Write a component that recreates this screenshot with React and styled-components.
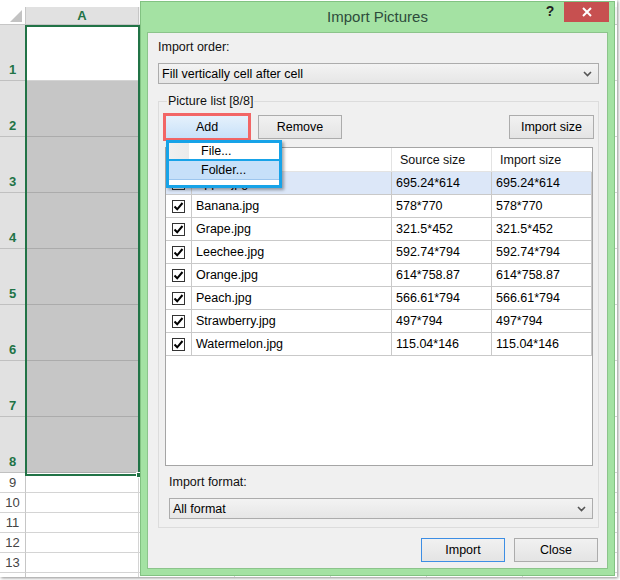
import React from "react";
import styled, { createGlobalStyle } from "styled-components";

const GlobalStyle = createGlobalStyle`
  html, body {
    margin: 0;
    padding: 0;
    background: #fff;
  }
  body {
    font-family: "Liberation Sans", Arial, sans-serif;
  }
  * {
    box-sizing: border-box;
  }
`;

const Page = styled.div`
  width: 620px;
  height: 580px;
  background: #fff;
`;

/* ---------- spreadsheet behind the dialog ---------- */

const Sheet = styled.div`
  position: relative;
  width: 617px;
  height: 577px;
  padding-top: 7px;
  background: #fff;
  box-shadow: 1px 1px 3px rgba(0, 0, 0, 0.45);
  overflow: hidden;
`;

const Grid = styled.div`
  display: grid;
  grid-template-columns: 26px 113px repeat(6, 96px);
  grid-template-rows: 18px repeat(8, 56px) repeat(6, 20px);
`;

const Corner = styled.div`
  display: flex;
  align-items: flex-end;
  justify-content: flex-end;
  padding: 0 3px 2px 0;
  background: #fff;
  border-right: 1px solid #c6c6c6;
  border-bottom: 1px solid #c6c6c6;
`;

const ColHead = styled.div`
  display: flex;
  align-items: center;
  justify-content: center;
  background: ${(p) => (p.$active ? "#e1e1e1" : "#f3f3f3")};
  color: ${(p) => (p.$active ? "#217346" : "#444")};
  border-right: 1px solid #c6c6c6;
  border-bottom: 1px solid #c6c6c6;
  font-size: 13px;
  font-weight: bold;
`;

const RowHead = styled.div`
  display: flex;
  justify-content: center;
  align-items: ${(p) => (p.$tall ? "flex-end" : "center")};
  padding-bottom: ${(p) => (p.$tall ? "3px" : "0")};
  background: ${(p) => (p.$active ? "#e1e1e1" : "#fff")};
  color: ${(p) => (p.$active ? "#217346" : "#444")};
  font-weight: ${(p) => (p.$active ? "bold" : "normal")};
  font-size: 13px;
  border-right: 1px solid #c6c6c6;
  border-bottom: 1px solid ${(p) => (p.$active ? "#c0c0c0" : "#d4d4d4")};
`;

const Cell = styled.div`
  background: ${(p) => (p.$fill ? "#c6c6c6" : "#fff")};
  border-right: 1px solid #d4d4d4;
  border-bottom: 1px solid ${(p) => (p.$fill ? "#ababab" : "#d4d4d4")};
`;

const Selection = styled.div`
  position: absolute;
  left: 25px;
  top: 25px;
  width: 115px;
  height: 451px;
  border: 2px solid #217346;
  pointer-events: none;
`;

const FillHandle = styled.div`
  position: absolute;
  right: -4px;
  bottom: -4px;
  width: 6px;
  height: 6px;
  background: #217346;
  border: 1px solid #fff;
`;

/* ---------- dialog ---------- */

const Dialog = styled.div`
  position: absolute;
  left: 140px;
  top: 1px;
  width: 475px;
  height: 575px;
  display: flex;
  flex-direction: column;
  background: #a4e2a3;
  border: 1px solid #82c282;
`;

const TitleBar = styled.div`
  height: 30px;
  display: grid;
  grid-template-columns: 1fr auto 1fr;
`;

const Title = styled.div`
  grid-column: 2;
  line-height: 30px;
  font-size: 15px;
  color: #2e4c3c;
`;

const Controls = styled.div`
  display: flex;
  justify-content: flex-end;
  align-items: flex-start;
  padding-right: 5px;
`;

const Help = styled.div`
  width: 14px;
  margin-right: 7px;
  line-height: 19px;
  text-align: center;
  font-size: 14px;
  font-weight: bold;
  color: #222;
`;

const CloseX = styled.div`
  width: 45px;
  height: 20px;
  display: flex;
  align-items: center;
  justify-content: center;
  background: #c75050;
`;

const Body = styled.div`
  flex: 1;
  display: flex;
  flex-direction: column;
  margin: 0 6px 6px;
  padding: 7px 0 6px;
  background: #f0f0f0;
  border: 1px solid #8cc48b;
`;

const Label = styled.div`
  margin: ${(p) => p.$top || 0}px 0 0 ${(p) => p.$indent || 0}px;
  line-height: 14px;
  font-size: 12.5px;
  color: #111;
`;

const Select = styled.div`
  width: ${(p) => p.$width}px;
  height: 21px;
  margin: 9px 0 0 ${(p) => p.$indent || 0}px;
  display: flex;
  align-items: center;
  justify-content: space-between;
  padding: 0 6px 0 3px;
  background: linear-gradient(#f3f3f3, #e6e6e6);
  border: 1px solid #acacac;
  font-size: 12.5px;
  color: #000;
`;

const Group = styled.fieldset`
  width: 441px;
  margin: 10px 0 0 10px;
  padding: 7px 4px 8px 6px;
  border: 1px solid #dcdcdc;
  min-width: 0;
`;

const Legend = styled.legend`
  margin-left: 2px;
  padding: 0 1px;
  line-height: 14px;
  font-size: 12.5px;
  color: #111;
`;

const ButtonRow = styled.div`
  display: flex;
  gap: 9px;
`;

const AddWrap = styled.div`
  position: relative;
`;

const Button = styled.button`
  width: ${(p) => p.$width || 84}px;
  height: 24px;
  margin-left: ${(p) => (p.$push ? "auto" : "0")};
  padding: 0;
  border: 1px solid ${(p) => (p.$focused ? "#3d8ee4" : "#acacac")};
  background: ${(p) =>
    p.$hot
      ? "linear-gradient(#e5f1fc, #c8e1f9)"
      : "linear-gradient(#f1f1f1, #e4e4e4)"};
  outline: ${(p) => (p.$marked ? "3px solid #f26666" : "none")};
  outline-offset: -1px;
  font-family: "Liberation Sans", Arial, sans-serif;
  font-size: 12.5px;
  color: #000;
`;

const Menu = styled.div`
  position: absolute;
  left: 1px;
  top: 25px;
  z-index: 5;
  width: 116px;
  height: 48px;
  background: #fff;
  border: 3px solid #17a3e8;
  box-shadow: 2px 2px 3px rgba(0, 0, 0, 0.35);
`;

const MenuItem = styled.div`
  height: ${(p) => (p.$active ? 19 : 18)}px;
  display: flex;
  align-items: center;
  padding-left: 32px;
  font-size: 12.5px;
  color: #000;
  background: ${(p) =>
    p.$active
      ? "#c6e0f9"
      : "linear-gradient(to right, #f0f0f0 0, #ebebeb 20px, #fff 20px)"};
  border-bottom: ${(p) =>
    p.$active ? "1px solid #9cc6ee" : "2px solid #17a3e8"};
`;

const List = styled.div`
  width: 428px;
  height: 319px;
  margin-top: 8px;
  background: #fff;
  border: 1px solid #a5a5a5;
  display: grid;
  grid-template-columns: 26px 200px 100px 100px;
  grid-template-rows: 24px;
  grid-auto-rows: 23px;
  align-content: start;
`;

const HeadCell = styled.div`
  display: flex;
  align-items: center;
  padding-left: 8px;
  border-right: 1px solid ${(p) => (p.$sep ? "#e3e3e3" : "transparent")};
  border-bottom: 1px solid #e3e3e3;
  font-size: 12.5px;
  color: #111;
`;

const ListCell = styled.div`
  display: flex;
  align-items: center;
  justify-content: ${(p) => (p.$center ? "center" : "flex-start")};
  padding-left: ${(p) => (p.$center ? 0 : 4)}px;
  background: ${(p) => (p.$selected ? "#dce7f8" : "#fff")};
  border-right: 1px solid #c9c9c9;
  border-bottom: 1px solid #c9c9c9;
  font-size: 12.5px;
  color: #000;
  white-space: nowrap;
`;

const CheckBox = styled.div`
  width: 13px;
  height: 13px;
  display: flex;
  align-items: center;
  justify-content: center;
  background: #fff;
  border: 1px solid #333;
`;

const Footer = styled.div`
  margin-top: auto;
  display: flex;
  justify-content: flex-end;
  gap: 9px;
  padding-right: 9px;
`;

const Chevron = () => (
  <svg width="9" height="6" viewBox="0 0 9 6">
    <polyline
      points="1,1 4.5,4.5 8,1"
      fill="none"
      stroke="#555"
      strokeWidth="1.6"
    />
  </svg>
);

const Check = () => (
  <svg width="11" height="11" viewBox="0 0 11 11">
    <polyline
      points="1.5,5.5 4.2,8.3 9.5,2"
      fill="none"
      stroke="#000"
      strokeWidth="2"
    />
  </svg>
);

const pictures = [
  ["Apple.jpg", "695.24*614", "695.24*614"],
  ["Banana.jpg", "578*770", "578*770"],
  ["Grape.jpg", "321.5*452", "321.5*452"],
  ["Leechee.jpg", "592.74*794", "592.74*794"],
  ["Orange.jpg", "614*758.87", "614*758.87"],
  ["Peach.jpg", "566.61*794", "566.61*794"],
  ["Strawberry.jpg", "497*794", "497*794"],
  ["Watermelon.jpg", "115.04*146", "115.04*146"],
];

const extraCols = 6;

function SpreadSheet() {
  const rows = [];
  for (let r = 1; r <= 14; r++) {
    const tall = r <= 8;
    const active = r <= 8;
    rows.push(
      <RowHead key={"h" + r} $tall={tall} $active={active}>
        {r <= 13 ? r : ""}
      </RowHead>
    );
    rows.push(<Cell key={"a" + r} $fill={r >= 2 && r <= 8} />);
    for (let c = 0; c < extraCols; c++) {
      rows.push(<Cell key={r + "-" + c} />);
    }
  }

  // columns B.. are hidden behind the dialog, so their headers stay blank
  return (
    <Grid>
      <Corner>
        <svg width="12" height="12" viewBox="0 0 12 12">
          <polygon points="12,0 12,12 0,12" fill="#c3c3c3" />
        </svg>
      </Corner>
      <ColHead $active>A</ColHead>
      {Array.from({ length: extraCols }).map((_, i) => (
        <ColHead key={i} />
      ))}
      {rows}
    </Grid>
  );
}

export default function App() {
  return (
    <Page>
      <GlobalStyle />
      <Sheet>
        <SpreadSheet />
        <Selection>
          <FillHandle />
        </Selection>

        <Dialog>
          <TitleBar>
            <Title>Import Pictures</Title>
            <Controls>
              <Help>?</Help>
              <CloseX>
                <svg width="10" height="10" viewBox="0 0 10 10">
                  <path
                    d="M1 1 L9 9 M9 1 L1 9"
                    stroke="#fff"
                    strokeWidth="2"
                  />
                </svg>
              </CloseX>
            </Controls>
          </TitleBar>

          <Body>
            <Label $indent={10}>Import order:</Label>
            <Select $width={441} $indent={10}>
              Fill vertically cell after cell
              <Chevron />
            </Select>

            <Group>
              <Legend>Picture list [8/8]</Legend>
              <ButtonRow>
                <AddWrap>
                  <Button $hot $marked>
                    Add
                  </Button>
                  <Menu>
                    <MenuItem>File...</MenuItem>
                    <MenuItem $active>Folder...</MenuItem>
                  </Menu>
                </AddWrap>
                <Button>Remove</Button>
                <Button $push $width={85}>
                  Import size
                </Button>
              </ButtonRow>

              <List>
                <HeadCell />
                <HeadCell $sep />
                <HeadCell $sep>Source size</HeadCell>
                <HeadCell>Import size</HeadCell>
                {pictures.map(([name, src, imp], i) => (
                  <React.Fragment key={name}>
                    <ListCell $center $selected={i === 0}>
                      <CheckBox>
                        <Check />
                      </CheckBox>
                    </ListCell>
                    <ListCell $selected={i === 0}>{name}</ListCell>
                    <ListCell $selected={i === 0}>{src}</ListCell>
                    <ListCell $selected={i === 0}>{imp}</ListCell>
                  </React.Fragment>
                ))}
              </List>

              <Label $indent={4} $top={9}>
                Import format:
              </Label>
              <Select $width={424} $indent={4}>
                All format
                <Chevron />
              </Select>
            </Group>

            <Footer>
              <Button $focused>Import</Button>
              <Button>Close</Button>
            </Footer>
          </Body>
        </Dialog>
      </Sheet>
    </Page>
  );
}
